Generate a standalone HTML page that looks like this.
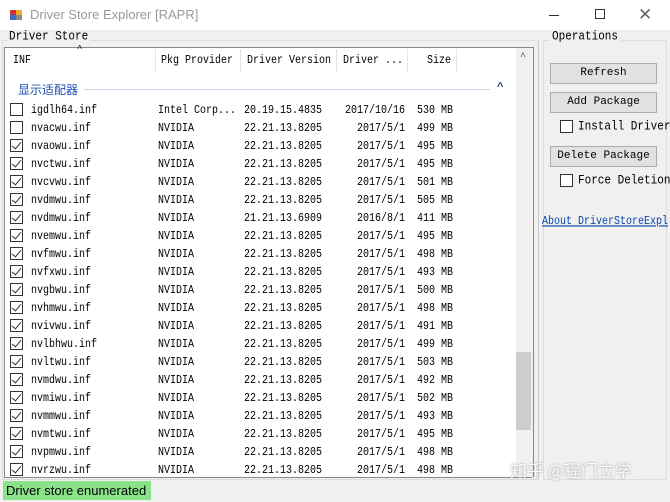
<!DOCTYPE html><html><head><style>
*{margin:0;padding:0;box-sizing:border-box}
body{width:670px;height:502px;background:#f0f0f0;position:relative;overflow:hidden;font-family:"Liberation Mono","Noto Serif CJK SC",monospace;font-size:10px;color:#000}
.a{position:absolute;white-space:nowrap}
.t{transform:scaleY(1.15);transform-origin:0 50%}
.cb{position:absolute;width:13px;height:13px;border:1px solid #333;background:#fff}
.cb.c::after{content:"";position:absolute;left:3px;top:0px;width:4px;height:8px;border:solid #333;border-width:0 1.3px 1.3px 0;transform:rotate(40deg)}
.btn{position:absolute;left:550px;width:107px;height:21px;background:#e1e1e1;border:1px solid #adadad;text-align:center;line-height:19px;font-size:11px}
</style></head><body>
<div class="a" style="left:0;top:0;width:670px;height:30px;background:#fff"></div>
<svg class="a" style="left:10px;top:8px" width="14" height="14"><rect x="0" y="2" width="6" height="5" fill="#c33"/><rect x="6" y="2" width="6" height="5" fill="#e8b020"/><rect x="0" y="7" width="6" height="5" fill="#3a6fc0"/><rect x="6" y="7" width="6" height="5" fill="#8a8a8a"/></svg>
<div class="a" style="left:30px;top:7px;font-family:'Liberation Sans','Noto Sans CJK SC',sans-serif;font-size:13px;color:#999">Driver Store Explorer [RAPR]</div>
<div class="a" style="left:549px;top:15px;width:10px;height:1px;background:#333"></div>
<div class="a" style="left:595px;top:9px;width:10px;height:10px;border:1px solid #333"></div>
<div class="a" style="left:638px;top:5px;font-family:'Liberation Sans',sans-serif;font-size:17px;color:#666">✕</div>
<div class="a" style="left:2px;top:40px;width:537px;height:440px;border:1px solid #ddd;border-right-color:#ccc"></div>
<div class="a t" style="left:7px;top:31px;background:#f0f0f0;padding:0 2px;font-size:11px">Driver Store</div>
<div class="a" style="left:543px;top:40px;width:124px;height:440px;border:1px solid #ddd"></div>
<div class="a t" style="left:549px;top:31px;background:#f0f0f0;padding:0 3px;font-size:11px">Operations</div>
<div class="a" style="left:4px;top:47px;width:530px;height:431px;background:#fff;border:1px solid #828790"></div>
<div class="a" style="left:155px;top:49px;width:1px;height:24px;background:#e5e5e5"></div>
<div class="a" style="left:240px;top:49px;width:1px;height:24px;background:#e5e5e5"></div>
<div class="a" style="left:336px;top:49px;width:1px;height:24px;background:#e5e5e5"></div>
<div class="a" style="left:407px;top:49px;width:1px;height:24px;background:#e5e5e5"></div>
<div class="a" style="left:456px;top:49px;width:1px;height:24px;background:#e5e5e5"></div>
<div class="a t" style="left:13px;top:56px">INF</div>
<div class="a" style="left:77px;top:44px;font-size:9px">^</div>
<div class="a t" style="left:161px;top:56px">Pkg Provider</div>
<div class="a t" style="left:247px;top:56px">Driver Version</div>
<div class="a t" style="left:343px;top:56px">Driver ...</div>
<div class="a t" style="left:427px;top:56px">Size</div>
<div class="a" style="left:516px;top:48px;width:17px;height:429px;background:#f0f0f0"></div>
<div class="a" style="left:520px;top:52px;font-size:10px;color:#555">^</div>
<div class="a" style="left:516px;top:352px;width:15px;height:78px;background:#cdcdcd"></div>
<div class="a" style="left:18px;top:81px;color:#1e50b4;font-family:'Liberation Sans','Noto Sans CJK SC',sans-serif;font-size:12px">显示适配器</div>
<div class="a" style="left:84px;top:89px;width:406px;height:1px;background:#c8d4e8"></div>
<div class="a" style="left:497px;top:82px;color:#1e3c78;font-size:11px;font-weight:bold">^</div>
<div id="rows"></div>
<div class="btn" style="top:63px">Refresh</div>
<div class="btn" style="top:92px">Add Package</div>
<div class="cb" style="left:560px;top:120px"></div>
<div class="a t" style="left:578px;top:121px;font-size:11px">Install Driver</div>
<div class="btn" style="top:146px">Delete Package</div>
<div class="cb" style="left:560px;top:174px"></div>
<div class="a t" style="left:578px;top:175px;font-size:11px">Force Deletion</div>
<div class="a t" style="left:542px;top:217px;color:#0645ad;text-decoration:underline">About DriverStoreExpl</div>
<div class="a" style="left:3px;top:481px;width:148px;height:19px;background:#8ae38a;font-family:'Liberation Sans',sans-serif;font-size:13px;line-height:19px;padding-left:3px">Driver store enumerated</div>
<div class="a" style="left:510px;top:457px;font-family:'Noto Sans CJK SC',sans-serif;font-size:17px;color:rgba(255,255,255,.9);text-shadow:0 0 2px #999">知乎 @程门立学</div>
<script>
var d=[["igdlh64.inf","Intel Corp...","20.19.15.4835","2017/10/16","530",0],["nvacwu.inf","NVIDIA","22.21.13.8205","2017/5/1","499",0],["nvaowu.inf","NVIDIA","22.21.13.8205","2017/5/1","495",1],["nvctwu.inf","NVIDIA","22.21.13.8205","2017/5/1","495",1],["nvcvwu.inf","NVIDIA","22.21.13.8205","2017/5/1","501",1],["nvdmwu.inf","NVIDIA","22.21.13.8205","2017/5/1","505",1],["nvdmwu.inf","NVIDIA","21.21.13.6909","2016/8/1","411",1],["nvemwu.inf","NVIDIA","22.21.13.8205","2017/5/1","495",1],["nvfmwu.inf","NVIDIA","22.21.13.8205","2017/5/1","498",1],["nvfxwu.inf","NVIDIA","22.21.13.8205","2017/5/1","493",1],["nvgbwu.inf","NVIDIA","22.21.13.8205","2017/5/1","500",1],["nvhmwu.inf","NVIDIA","22.21.13.8205","2017/5/1","498",1],["nvivwu.inf","NVIDIA","22.21.13.8205","2017/5/1","491",1],["nvlbhwu.inf","NVIDIA","22.21.13.8205","2017/5/1","499",1],["nvltwu.inf","NVIDIA","22.21.13.8205","2017/5/1","503",1],["nvmdwu.inf","NVIDIA","22.21.13.8205","2017/5/1","492",1],["nvmiwu.inf","NVIDIA","22.21.13.8205","2017/5/1","502",1],["nvmmwu.inf","NVIDIA","22.21.13.8205","2017/5/1","493",1],["nvmtwu.inf","NVIDIA","22.21.13.8205","2017/5/1","495",1],["nvpmwu.inf","NVIDIA","22.21.13.8205","2017/5/1","498",1],["nvrzwu.inf","NVIDIA","22.21.13.8205","2017/5/1","498",1]];
var h="";d.forEach(function(r,i){var y=103+i*18;var ch=Math.min(13,477-y);var ty=y+3;
h+='<div class="cb'+(r[5]?' c':'')+'" style="left:10px;top:'+y+'px;height:'+ch+'px"></div>';
h+='<div class="a t" style="left:31px;top:'+ty+'px">'+r[0]+'</div><div class="a t" style="left:158px;top:'+ty+'px">'+r[1]+'</div><div class="a t" style="left:244px;top:'+ty+'px">'+r[2]+'</div><div class="a t" style="left:'+(405-r[3].length*6)+'px;top:'+ty+'px">'+r[3]+'</div><div class="a t" style="left:417px;top:'+ty+'px">'+r[4]+' MB</div>';});
document.getElementById("rows").innerHTML=h;
</script>
</body></html>
